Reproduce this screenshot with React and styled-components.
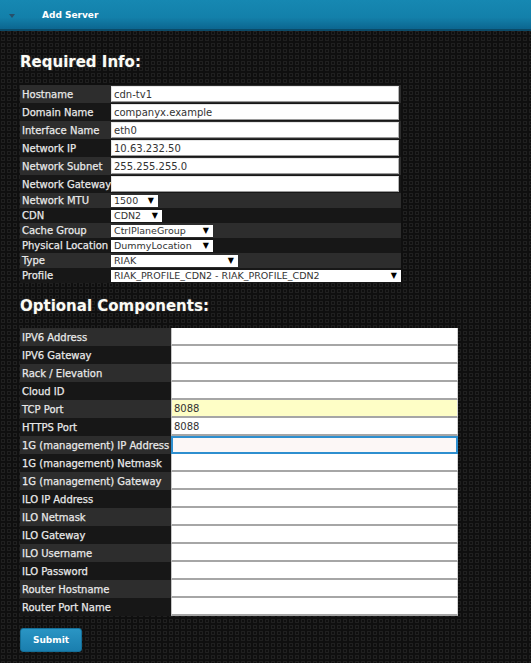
import React from 'react'
import styled, { createGlobalStyle } from 'styled-components'

const GlobalStyle = createGlobalStyle`
  html, body {
    margin: 0;
    padding: 0;
  }
  body {
    min-height: 100vh;
    background-color: #0f0f0f;
    background-image: radial-gradient(circle at center, transparent 1.1px, rgba(255,255,255,0.07) 1.5px, rgba(255,255,255,0.07) 2.1px, transparent 2.5px);
    background-size: 6px 6px;
    font-family: "DejaVu Sans", Verdana, sans-serif;
  }
`

// data for the two forms
const required = [
  { label: 'Hostname', value: 'cdn-tv1' },
  { label: 'Domain Name', value: 'companyx.example' },
  { label: 'Interface Name', value: 'eth0' },
  { label: 'Network IP', value: '10.63.232.50' },
  { label: 'Network Subnet', value: '255.255.255.0' },
  { label: 'Network Gateway', value: '' },
  { label: 'Network MTU', value: '1500', select: 47 },
  { label: 'CDN', value: 'CDN2', select: 51 },
  { label: 'Cache Group', value: 'CtrlPlaneGroup', select: 102 },
  { label: 'Physical Location', value: 'DummyLocation', select: 102 },
  { label: 'Type', value: 'RIAK', select: 127 },
  { label: 'Profile', value: 'RIAK_PROFILE_CDN2 - RIAK_PROFILE_CDN2', select: 290 },
]

const optional = [
  { label: 'IPV6 Address' },
  { label: 'IPV6 Gateway' },
  { label: 'Rack / Elevation' },
  { label: 'Cloud ID' },
  { label: 'TCP Port', value: '8088', state: 'autofill' },
  { label: 'HTTPS Port', value: '8088' },
  { label: '1G (management) IP Address', state: 'focus' },
  { label: '1G (management) Netmask' },
  { label: '1G (management) Gateway' },
  { label: 'ILO IP Address' },
  { label: 'ILO Netmask' },
  { label: 'ILO Gateway' },
  { label: 'ILO Username' },
  { label: 'ILO Password' },
  { label: 'Router Hostname' },
  { label: 'Router Port Name' },
]

function App() {
  return (
    <>
      <GlobalStyle />
      <Header>
        <Caret viewBox="0 0 6 4"><polygon points="0,0 6,0 3,4" /></Caret>
        <HeaderTitle>Add Server</HeaderTitle>
      </Header>
      <Content>
        <Heading>Required Info:</Heading>
        <Table $width={381}>
          {required.map((r, i) => (
            <Row key={r.label} $alt={i % 2 === 0} $cols="91px 1fr" $h={r.select ? 15 : 18}>
              <Label>{r.label}</Label>
              {r.select ? (
                <SelectBox $w={r.select}>
                  <span>{r.value}</span>
                  <Arrow>▼</Arrow>
                </SelectBox>
              ) : (
                <TextInput defaultValue={r.value} />
              )}
            </Row>
          ))}
        </Table>

        <Heading $top={14} $bottom={13}>Optional Components:</Heading>
        <Table $width={438}>
          {optional.map((r, i) => (
            <Row key={r.label} $alt={i % 2 === 0} $cols="151px 1fr" $h={18}>
              <Label>{r.label}</Label>
              <WideInput defaultValue={r.value || ''} $state={r.state} />
            </Row>
          ))}
        </Table>

        <SubmitButton>Submit</SubmitButton>
      </Content>
    </>
  )
}

const Header = styled.div`
  height: 29px;
  display: flex;
  align-items: center;
  background: linear-gradient(to bottom, #1688b2 0%, #1380aa 60%, #0c6690 100%);
  border-bottom: 2px solid #0a4a68;
`

const Caret = styled.svg`
  width: 6px;
  height: 4px;
  margin: 2px 0 0 9px;
  fill: #27506a;
`

const HeaderTitle = styled.span`
  margin-left: 27px;
  color: #fff;
  font-family: "DejaVu Sans", Verdana, sans-serif;
  font-weight: bold;
  font-size: 9px;
`

const Content = styled.div`
  padding: 22px 0 12px 20px;
  display: flex;
  flex-direction: column;
  align-items: flex-start;
`

const Heading = styled.h2`
  margin: ${p => p.$top || 0}px 0 ${p => p.$bottom || 14}px 0;
  color: #fbfbf5;
  font-family: "DejaVu Sans", Verdana, sans-serif;
  font-weight: bold;
  font-size: 15px;
  line-height: 18px;
  text-shadow: 0 0 2px rgba(255, 255, 255, 0.25);
`

const Table = styled.div`
  width: ${p => p.$width}px;
  display: flex;
  flex-direction: column;
`

const Row = styled.div`
  display: grid;
  grid-template-columns: ${p => p.$cols};
  align-items: center;
  height: ${p => p.$h}px;
  background: ${p => (p.$alt ? '#2d2d2d' : '#171717')};
`

const Label = styled.span`
  padding-left: 2px;
  color: #ececec;
  font-size: 10px;
  white-space: nowrap;
  -webkit-text-stroke: 0.25px #e4e4e4;
`

const TextInput = styled.input`
  box-sizing: border-box;
  width: 288px;
  height: 16px;
  margin: 0;
  padding: 0 2px;
  border: 1px solid;
  border-color: #e6e6e6 #b5b5b5 #9a9a9a #e6e6e6;
  background: #fff;
  color: #333;
  font-family: "DejaVu Sans", Verdana, sans-serif;
  font-size: 10px;
  outline: none;
`

const WideInput = styled.input`
  box-sizing: border-box;
  width: 100%;
  height: 18px;
  margin: 0;
  padding: 0 2px;
  border-style: solid;
  border-width: 0 1px 2px 1px;
  border-color: #d4d4d4 #d4d4d4 #a6a6a6 #c6c6c6;
  background: ${p => (p.$state === 'autofill' ? '#fefec6' : p.$state === 'focus' ? '#fcf7f6' : '#fff')};
  color: #333;
  font-family: "DejaVu Sans", Verdana, sans-serif;
  font-size: 10px;
  outline: none;
  ${p => p.$state === 'focus' && `
    border: 2px solid #2e8fcf;
  `}
`

const SelectBox = styled.div`
  box-sizing: border-box;
  width: ${p => p.$w}px;
  height: 12px;
  display: flex;
  align-items: center;
  justify-content: space-between;
  padding: 0 4px 0 3px;
  background: #fff;
  color: #333;
  font-size: 9.5px;
  white-space: nowrap;
  overflow: hidden;
`

const Arrow = styled.span`
  color: #000;
  font-size: 8px;
  margin-left: 4px;
`

const SubmitButton = styled.button`
  margin-top: 12px;
  width: 62px;
  height: 24px;
  border: 1px solid #146f98;
  border-radius: 3px;
  background: linear-gradient(to bottom, #2a95c4, #1a7eae);
  color: #fff;
  font-family: "DejaVu Sans", Verdana, sans-serif;
  font-weight: bold;
  font-size: 9px;
  cursor: pointer;
`

export default App
